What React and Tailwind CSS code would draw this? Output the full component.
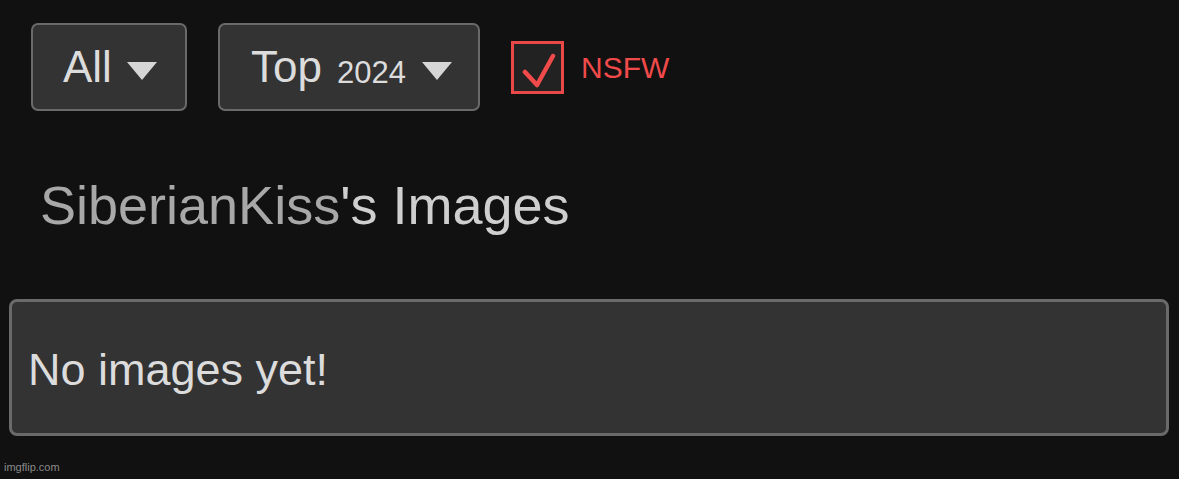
import React from 'react';

function Caret() {
  return (
    <svg width="30" height="18" viewBox="0 0 30 18" className="shrink-0">
      <path d="M0 0 L30 0 L15 18 Z" fill="#d6d6d6" />
    </svg>
  );
}

function SelectButton({ children, className = '' }) {
  return (
    <button
      className={`flex items-center h-[88px] rounded-[7px] border-2 border-[#6a6a6a] bg-[#333333] text-[#dcdcdc] ${className}`}
    >
      {children}
    </button>
  );
}

export default function App() {
  return (
    <div
      className="relative w-[1179px] h-[479px] bg-[#111111] overflow-hidden"
      style={{ fontFamily: '"Liberation Sans", Arial, sans-serif' }}
    >
      {/* Filters */}
      <div className="flex items-start pt-[23px] pl-[31px]">
        <SelectButton className="w-[156px] pl-[30px]">
          <span className="text-[44px] leading-none">All</span>
          <span className="ml-[15px] mt-[8px] flex"><Caret /></span>
        </SelectButton>
        <SelectButton className="ml-[31px] w-[262px] pl-[31px]">
          <span className="text-[44px] leading-none">Top</span>
          <span className="ml-[15px] text-[31px] leading-none mt-[10px]">2024</span>
          <span className="ml-[16px] mt-[8px] flex"><Caret /></span>
        </SelectButton>
        <label className="ml-[31px] mt-[18px] flex items-center">
          <span className="w-[53px] h-[53px] border-[3px] border-[#e94848] bg-[#222222] flex items-center justify-center">
            <svg width="40" height="40" viewBox="0 0 40 40">
              <path
                d="M7 24 L19 37 L35 8"
                fill="none"
                stroke="#f04a4a"
                strokeWidth="4.5"
                strokeLinecap="round"
                strokeLinejoin="round"
              />
            </svg>
          </span>
          <span className="ml-[17px] text-[30px] leading-none text-[#f04a4a]">NSFW</span>
        </label>
      </div>

      {/* Heading */}
      <h1 className="mt-[67px] ml-[40px] text-[54px] leading-none font-normal">
        <span className="text-[#a8a8a8]">SiberianKiss</span>
        <span className="text-[#cfcfcf]">'s Images</span>
      </h1>

      {/* Empty state */}
      <div className="mt-[67px] ml-[9px] mr-[10px] h-[137px] rounded-[8px] border-[3px] border-[#6a6a6a] bg-[#333333] pl-[16px] pt-[45px]">
        <span className="block text-[45px] leading-none text-[#dcdcdc]">No images yet!</span>
      </div>

      <div className="absolute left-[4px] bottom-[4px] text-[11px] text-[#8a8a8a]">imgflip.com</div>
    </div>
  );
}
